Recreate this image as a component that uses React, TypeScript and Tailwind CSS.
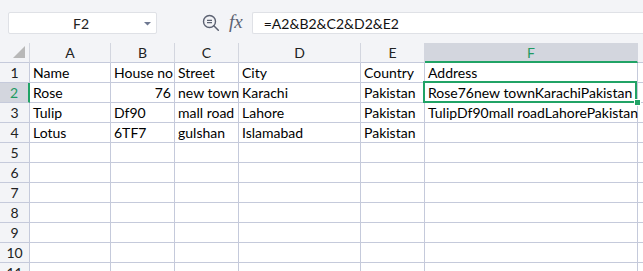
import React from "react";

const cols = [
  { key: "A", w: "w-[81px]" },
  { key: "B", w: "w-[64px]" },
  { key: "C", w: "w-[64px]" },
  { key: "D", w: "w-[122px]" },
  { key: "E", w: "w-[64px]" },
  { key: "F", w: "w-[213px]" },
];

type Cell = { v: string; right?: boolean };

const data: Cell[][] = [
  [{ v: "Name" }, { v: "House no" }, { v: "Street" }, { v: "City" }, { v: "Country" }, { v: "Address" }],
  [{ v: "Rose" }, { v: "76", right: true }, { v: "new town" }, { v: "Karachi" }, { v: "Pakistan" }, { v: "Rose76new townKarachiPakistan" }],
  [{ v: "Tulip" }, { v: "Df90" }, { v: "mall road" }, { v: "Lahore" }, { v: "Pakistan" }, { v: "TulipDf90mall roadLahorePakistan" }],
  [{ v: "Lotus" }, { v: "6TF7" }, { v: "gulshan" }, { v: "Islamabad" }, { v: "Pakistan" }, { v: "" }],
];

const rowCount = 11;

function Toolbar() {
  return (
    <div className="flex h-[43px] items-start bg-[#f3f4f7] pt-[12px]">
      {/* name box */}
      <div className="ml-[8px] flex h-[22px] w-[149px] items-center rounded-[2px] border border-[#dfe1e6] bg-white">
        <span className="flex-1 pl-[10px] text-center text-[14px] text-[#222]">F2</span>
        <svg width="9" height="6" viewBox="0 0 9 6" className="mr-[4px] mt-[2px]">
          <path d="M1 1h7L4.5 4.5z" fill="#6e7891" />
        </svg>
      </div>
      {/* zoom icon */}
      <svg width="18" height="18" viewBox="0 0 18 18" className="ml-[45px] mt-[2px]">
        <circle cx="7.5" cy="7.5" r="6" fill="none" stroke="#5c6272" strokeWidth="1.4" />
        <path d="M5 6.3h5M5 8.7h5" stroke="#5c6272" strokeWidth="1.3" />
        <path d="M11.8 11.8l4.5 4.5" stroke="#5c6272" strokeWidth="1.5" strokeLinecap="round" />
      </svg>
      <span className="ml-[9px] mt-[-1px] font-['Liberation_Serif',serif] text-[19px] italic leading-[22px] text-[#5c6272]">
        fx
      </span>
      <div className="ml-[9px] flex h-[22px] flex-1 items-center rounded-l-[2px] border border-r-0 border-[#dfe1e6] bg-white pl-[11px] text-[14px] text-[#111]">
        =A2&amp;B2&amp;C2&amp;D2&amp;E2
      </div>
    </div>
  );
}

export default function App() {
  return (
    <div className="relative h-[271px] w-[643px] overflow-hidden bg-white font-['Lato',sans-serif] text-[14px]">
      <Toolbar />
      {/* column headers */}
      <div className="flex h-[20px] bg-[#f3f4f7]">
        <div className="relative w-[30px] shrink-0 border-r border-b border-r-[#d3d6df] border-b-[#c5cadb]">
          <svg width="12" height="12" viewBox="0 0 12 12" className="absolute bottom-[4px] right-[4px]">
            <path d="M12 0V12H0z" fill="#b8b8b8" />
          </svg>
        </div>
        {cols.map((c) =>
          c.key === "F" ? (
            <div
              key={c.key}
              className={`${c.w} flex shrink-0 items-center justify-center border-r border-b-2 border-r-[#d3d6df] border-b-[#21a366] bg-[#d3d6de] pt-[1px] text-[#1f9a62]`}
            >
              {c.key}
            </div>
          ) : (
            <div
              key={c.key}
              className={`${c.w} flex shrink-0 items-center justify-center border-r border-b border-r-[#d3d6df] border-b-[#c5cadb] text-[#222]`}
            >
              {c.key}
            </div>
          )
        )}
        <div className="flex-1 border-b border-[#c5cadb]" />
      </div>
      {/* rows */}
      {Array.from({ length: rowCount }).map((_, r) => {
        const row = data[r];
        const sel = r === 1;
        return (
          <div key={r} className="flex h-[20px]">
            <div
              className={
                sel
                  ? "flex w-[30px] shrink-0 items-center justify-center border-r-2 border-b border-r-[#21a366] border-b-[#c5cadb] bg-[#d3d6de] text-[#1f9a62]"
                  : "flex w-[30px] shrink-0 items-center justify-center border-r border-b border-[#c5cadb] bg-[#f3f4f7] text-[#222]"
              }
            >
              {r + 1}
            </div>
            {cols.map((c, i) => {
              const cell = row ? row[i] : undefined;
              return (
                <div
                  key={c.key}
                  className={`${c.w} flex shrink-0 items-center overflow-visible whitespace-nowrap border-r border-b border-[#c5cadb] px-[3px] text-black ${
                    cell?.right ? "justify-end" : ""
                  }`}
                >
                  {cell?.v}
                </div>
              );
            })}
            <div className="flex-1 border-b border-[#c5cadb]" />
          </div>
        );
      })}
      {/* selection on F2 */}
      <div className="pointer-events-none absolute left-[423px] top-[81px] h-[22px] w-[214px] border-2 border-[#21a366]" />
      <div className="pointer-events-none absolute left-[634px] top-[99px] h-[7px] w-[7px] border border-white bg-[#21a366]" />
    </div>
  );
}
